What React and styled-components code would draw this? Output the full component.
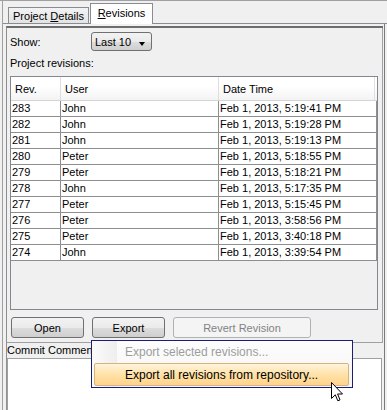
import React from "react";
import styled, { createGlobalStyle } from "styled-components";

const GlobalStyle = createGlobalStyle`
    html, body {
        margin: 0;
        padding: 0;
        background: #f0f0f0;
    }
    body {
        font-family: "Liberation Sans", Arial, sans-serif;
        font-size: 11px;
        color: #000;
    }
`;

const revisions = [
    { rev: 283, user: "John", date: "Feb 1, 2013, 5:19:41 PM" },
    { rev: 282, user: "John", date: "Feb 1, 2013, 5:19:28 PM" },
    { rev: 281, user: "John", date: "Feb 1, 2013, 5:19:13 PM" },
    { rev: 280, user: "Peter", date: "Feb 1, 2013, 5:18:55 PM" },
    { rev: 279, user: "Peter", date: "Feb 1, 2013, 5:18:21 PM" },
    { rev: 278, user: "John", date: "Feb 1, 2013, 5:17:35 PM" },
    { rev: 277, user: "Peter", date: "Feb 1, 2013, 5:15:45 PM" },
    { rev: 276, user: "Peter", date: "Feb 1, 2013, 3:58:56 PM" },
    { rev: 275, user: "Peter", date: "Feb 1, 2013, 3:40:18 PM" },
    { rev: 274, user: "John", date: "Feb 1, 2013, 3:39:54 PM" },
];

function App() {
    return (
        <>
            <GlobalStyle />
            <Window>
                <Frame>
                    <TabStrip>
                        <Tab>
                            <span>
                                Project <u>D</u>etails
                            </span>
                        </Tab>
                        <Tab $active>
                            <span>
                                <u>R</u>evisions
                            </span>
                        </Tab>
                    </TabStrip>
                    <TabContent>
                        <SplitPane>
                            <TopPane>
                                <ShowRow>
                                    <Label>Show:</Label>
                                    <Combo>
                                        Last 10
                                        <ComboArrow />
                                    </Combo>
                                </ShowRow>
                                <SectionLabel>Project revisions:</SectionLabel>
                                <Table>
                                    <HeaderRow>
                                        <HeaderCell>Rev.</HeaderCell>
                                        <HeaderCell>User</HeaderCell>
                                        <HeaderCell $last>Date Time</HeaderCell>
                                    </HeaderRow>
                                    {revisions.map((r) => (
                                        <Row key={r.rev}>
                                            <Cell>{r.rev}</Cell>
                                            <Cell>{r.user}</Cell>
                                            <Cell>{r.date}</Cell>
                                        </Row>
                                    ))}
                                </Table>
                                <ButtonRow>
                                    <Button $w={73}>Open</Button>
                                    <Button $w={73}>Export</Button>
                                    <Button $w={138} disabled>
                                        Revert Revision
                                    </Button>
                                </ButtonRow>
                            </TopPane>
                            <BottomPane>
                                <CommentLabel>Commit Comments:</CommentLabel>
                                <CommentBox />
                            </BottomPane>
                        </SplitPane>
                    </TabContent>
                </Frame>

                <Menu>
                    <MenuItem $disabled>Export selected revisions...</MenuItem>
                    <MenuItem $hover>Export all revisions from repository...</MenuItem>
                </Menu>

                <Cursor width="12" height="20" viewBox="0 0 12 20">
                    <path
                        d="M0.5 0.5 L0.5 16.5 L4.3 12.8 L6.8 18.8 L9 17.9 L6.6 12 L11.5 12 Z"
                        fill="#fff"
                        stroke="#000"
                        strokeWidth="1"
                        strokeLinejoin="miter"
                    />
                </Cursor>
            </Window>
        </>
    );
}

export default App;

const Window = styled.div`
    position: relative;
    width: 387px;
    height: 410px;
    overflow: hidden;
    background: #f0f0f0;
    border-top: 1px solid #a0a0a0;
    box-sizing: border-box;
    padding-left: 2px;
`;

const Frame = styled.div`
    height: 100%;
    border-left: 1px solid #a0a0a0;
    display: flex;
    flex-direction: column;
`;

const TabStrip = styled.div`
    display: flex;
    align-items: flex-end;
    height: 22px;
    padding-left: 5px;
    border-bottom: 1px solid #898c95;
`;

const Tab = styled.div`
    box-sizing: border-box;
    display: flex;
    align-items: center;
    justify-content: center;
    border: 1px solid #898c95;
    border-bottom: none;
    height: ${(p) => (p.$active ? "21px" : "16px")};
    width: ${(p) => (p.$active ? "63px" : "81px")};
    margin-left: ${(p) => (p.$active ? "1px" : "0")};
    margin-bottom: ${(p) => (p.$active ? "-1px" : "0")};
    padding-bottom: ${(p) => (p.$active ? "3px" : "0")};
    background: ${(p) =>
        p.$active ? "#ffffff" : "linear-gradient(#f3f3f3, #e3e3e3)"};
    position: relative;
    z-index: ${(p) => (p.$active ? 1 : 0)};
    white-space: nowrap;
    u {
        text-decoration: underline;
    }
`;

const TabContent = styled.div`
    flex: 1;
    margin-right: 2px;
    border-right: 1px solid #7a7a7a;
    padding: 2px 1px 0 3px;
    display: flex;
    min-height: 0;
`;

const SplitPane = styled.div`
    flex: 1;
    border-top: 2px solid #6d6d6d;
    border-left: 1px solid #8f8f8f;
    display: flex;
    flex-direction: column;
`;

const TopPane = styled.div`
    height: 315px;
    box-sizing: border-box;
    border-right: 1px solid #a0a0a0;
    border-bottom: 1px solid #a0a0a0;
    padding: 4px 4px 0 3px;
    display: flex;
    flex-direction: column;
`;

const ShowRow = styled.div`
    display: flex;
    align-items: center;
    height: 19px;
`;

const Label = styled.div`
    width: 81px;
`;

const Combo = styled.div`
    box-sizing: border-box;
    position: relative;
    width: 61px;
    height: 19px;
    border: 1px solid #707070;
    border-radius: 3px;
    background: linear-gradient(#f2f2f2 0%, #ebebeb 50%, #dddddd 51%, #cfcfcf 100%);
    padding-left: 3px;
    display: flex;
    align-items: center;
`;

const ComboArrow = styled.span`
    position: absolute;
    right: 6px;
    top: 9px;
    width: 0;
    height: 0;
    border-left: 3.5px solid transparent;
    border-right: 3.5px solid transparent;
    border-top: 4px solid #000;
`;

const SectionLabel = styled.div`
    margin-top: 5px;
    height: 14px;
    line-height: 14px;
`;

const Table = styled.div`
    margin-top: 6px;
    height: 234px;
    box-sizing: border-box;
    border: 1px solid #828790;
    background: #f0f0f0;
    display: flex;
    flex-direction: column;
`;

const HeaderRow = styled.div`
    display: grid;
    grid-template-columns: 50px 158px 158px;
    height: 24px;
    box-sizing: border-box;
    border-bottom: 1px solid #d5d5d5;
    background: linear-gradient(#ffffff 0%, #ffffff 40%, #f3f3f4 100%);
`;

const HeaderCell = styled.div`
    box-sizing: border-box;
    padding-left: 4px;
    display: flex;
    align-items: center;
    border-right: 1px solid ${(p) => (p.$last ? "#e0e0e0" : "#dedede")};
    ${(p) => (p.$last ? "margin-right: 2px;" : "")}
`;

const Row = styled.div`
    display: grid;
    grid-template-columns: 50px 158px 158px;
    height: 16px;
    background: #fff;
`;

const Cell = styled.div`
    box-sizing: border-box;
    padding-left: 1px;
    line-height: 15px;
    border-right: 1px solid #8e8e8e;
    border-bottom: 1px solid #8e8e8e;
    white-space: nowrap;
    overflow: hidden;
`;

const ButtonRow = styled.div`
    display: flex;
    gap: 8px;
    margin-top: 7px;
    padding-left: 1px;
`;

const Button = styled.button`
    box-sizing: border-box;
    width: ${(p) => p.$w}px;
    height: 21px;
    border: 1px solid ${(p) => (p.disabled ? "#adb2b5" : "#707070")};
    border-radius: 3px;
    background: ${(p) =>
        p.disabled
            ? "#f4f4f4"
            : "linear-gradient(#f2f2f2 0%, #ebebeb 50%, #dddddd 51%, #cfcfcf 100%)"};
    color: ${(p) => (p.disabled ? "#838383" : "#000")};
    font-family: "Liberation Sans", Arial, sans-serif;
    font-size: 11px;
    padding: 0;
`;

const BottomPane = styled.div`
    flex: 1;
    display: flex;
    flex-direction: column;
`;

const CommentLabel = styled.div`
    height: 15px;
    line-height: 15px;
    padding-left: 0;
`;

const CommentBox = styled.div`
    flex: 1;
    margin-right: 1px;
    border: 1px solid #a0a0a0;
    border-bottom: none;
    background: #fff;
`;

const Menu = styled.div`
    position: absolute;
    left: 91px;
    top: 339px;
    width: 262px;
    height: 48px;
    box-sizing: border-box;
    border: 1px solid #1b1b78;
    background:
        linear-gradient(to right, #fbfbfb 0px, #eeeeee 25px, transparent 25px),
        linear-gradient(#fdfdfd, #f4f4f4);
    display: flex;
    flex-direction: column;
    font-size: 12px;
`;

const MenuItem = styled.div`
    box-sizing: border-box;
    height: ${(p) => (p.$hover ? "23px" : "22px")};
    margin: ${(p) => (p.$hover ? "0 3px 0 2px" : "0")};
    padding-left: ${(p) => (p.$hover ? "30px" : "33px")};
    display: flex;
    align-items: center;
    color: ${(p) => (p.$disabled ? "#9d9d9d" : "#000")};
    border: ${(p) => (p.$hover ? "1px solid #d8b47a" : "none")};
    border-radius: 2px;
    background: ${(p) =>
        p.$hover ? "linear-gradient(#fff4dc 0%, #ffe2a8 50%, #ffd38c 100%)" : "transparent"};
    white-space: nowrap;
`;

const Cursor = styled.svg`
    position: absolute;
    left: 331px;
    top: 381px;
`;
